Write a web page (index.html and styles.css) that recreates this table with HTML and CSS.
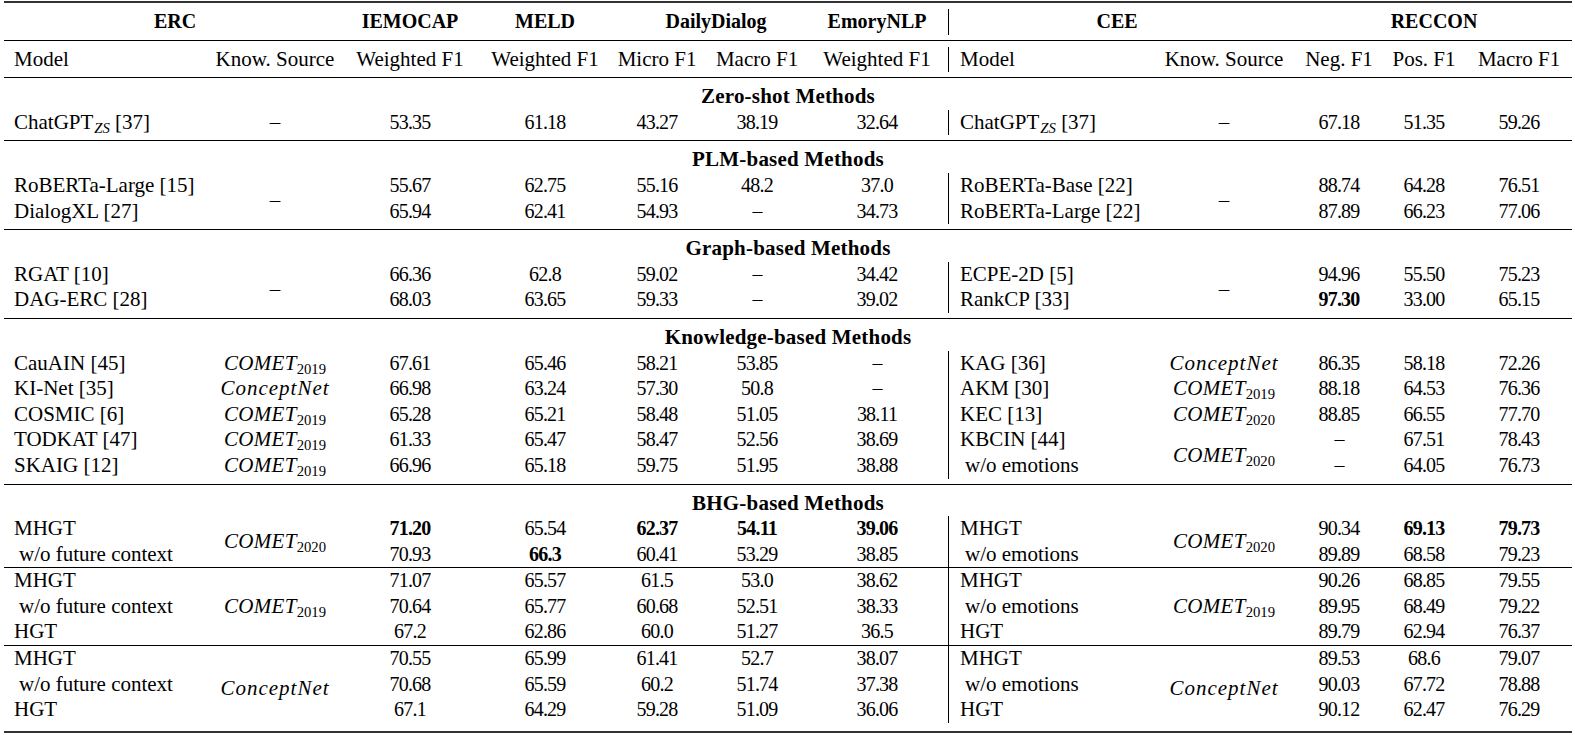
FILE: index.html
```html
<!DOCTYPE html>
<html lang="en">
<head>
<meta charset="utf-8">
<title>Results table</title>
<link rel="stylesheet" href="styles.css">
</head>
<body>
<table class="tbl">
<colgroup>
<col class="c-model"><col class="c-know"><col class="c-iem"><col class="c-meld"><col class="c-micro"><col class="c-macro"><col class="c-emory"><col class="c-model2"><col class="c-know2"><col class="c-neg"><col class="c-pos"><col class="c-macro2">
</colgroup>
<tbody>
<tr class="hdr grp first end">
<td colspan="2" class="b">ERC</td><td class="b">IEMOCAP</td><td class="b">MELD</td><td colspan="2" class="b">DailyDialog</td><td class="b">EmoryNLP</td><td colspan="2" class="b vl">CEE</td><td colspan="3" class="b">RECCON</td>
</tr>
<tr class="hdr first end">
<td class="m">Model</td><td>Know. Source</td><td>Weighted F1</td><td>Weighted F1</td><td>Micro F1</td><td>Macro F1</td><td>Weighted F1</td><td class="m2 vl">Model</td><td>Know. Source</td><td>Neg. F1</td><td>Pos. F1</td><td>Macro F1</td>
</tr>

<tr class="sec first"><td colspan="12" class="b">Zero-shot Methods</td></tr>
<tr class="end">
<td class="m">ChatGPT<i class="zs">ZS</i> [37]</td><td class="k">–</td><td>53.35</td><td>61.18</td><td>43.27</td><td>38.19</td><td>32.64</td><td class="m2 vl">ChatGPT<i class="zs">ZS</i> [37]</td><td class="k">–</td><td>67.18</td><td>51.35</td><td>59.26</td>
</tr>

<tr class="sec first"><td colspan="12" class="b">PLM-based Methods</td></tr>
<tr>
<td class="m">RoBERTa-Large [15]</td><td class="k" rowspan="2">–</td><td>55.67</td><td>62.75</td><td>55.16</td><td>48.2</td><td>37.0</td><td class="m2 vl">RoBERTa-Base [22]</td><td class="k" rowspan="2">–</td><td>88.74</td><td>64.28</td><td>76.51</td>
</tr>
<tr class="end">
<td class="m">DialogXL [27]</td><td>65.94</td><td>62.41</td><td>54.93</td><td>–</td><td>34.73</td><td class="m2 vl">RoBERTa-Large [22]</td><td>87.89</td><td>66.23</td><td>77.06</td>
</tr>

<tr class="sec first"><td colspan="12" class="b">Graph-based Methods</td></tr>
<tr>
<td class="m">RGAT [10]</td><td class="k" rowspan="2">–</td><td>66.36</td><td>62.8</td><td>59.02</td><td>–</td><td>34.42</td><td class="m2 vl">ECPE-2D [5]</td><td class="k" rowspan="2">–</td><td>94.96</td><td>55.50</td><td>75.23</td>
</tr>
<tr class="end">
<td class="m">DAG-ERC [28]</td><td>68.03</td><td>63.65</td><td>59.33</td><td>–</td><td>39.02</td><td class="m2 vl">RankCP [33]</td><td class="b">97.30</td><td>33.00</td><td>65.15</td>
</tr>

<tr class="sec first"><td colspan="12" class="b">Knowledge-based Methods</td></tr>
<tr>
<td class="m">CauAIN [45]</td><td class="k"><span class="kb">COMET</span><span class="yr">2019</span></td><td>67.61</td><td>65.46</td><td>58.21</td><td>53.85</td><td>–</td><td class="m2 vl">KAG [36]</td><td class="k"><span class="kn">ConceptNet</span></td><td>86.35</td><td>58.18</td><td>72.26</td>
</tr>
<tr>
<td class="m">KI-Net [35]</td><td class="k"><span class="kn">ConceptNet</span></td><td>66.98</td><td>63.24</td><td>57.30</td><td>50.8</td><td>–</td><td class="m2 vl">AKM [30]</td><td class="k"><span class="kb">COMET</span><span class="yr">2019</span></td><td>88.18</td><td>64.53</td><td>76.36</td>
</tr>
<tr>
<td class="m">COSMIC [6]</td><td class="k"><span class="kb">COMET</span><span class="yr">2019</span></td><td>65.28</td><td>65.21</td><td>58.48</td><td>51.05</td><td>38.11</td><td class="m2 vl">KEC [13]</td><td class="k"><span class="kb">COMET</span><span class="yr">2020</span></td><td>88.85</td><td>66.55</td><td>77.70</td>
</tr>
<tr>
<td class="m">TODKAT [47]</td><td class="k"><span class="kb">COMET</span><span class="yr">2019</span></td><td>61.33</td><td>65.47</td><td>58.47</td><td>52.56</td><td>38.69</td><td class="m2 vl">KBCIN [44]</td><td class="k span-end" rowspan="2"><span class="kb">COMET</span><span class="yr">2020</span></td><td>–</td><td>67.51</td><td>78.43</td>
</tr>
<tr class="end">
<td class="m">SKAIG [12]</td><td class="k"><span class="kb">COMET</span><span class="yr">2019</span></td><td>66.96</td><td>65.18</td><td>59.75</td><td>51.95</td><td>38.88</td><td class="m2 vl ind">w/o emotions</td><td>–</td><td>64.05</td><td>76.73</td>
</tr>

<tr class="sec first"><td colspan="12" class="b">BHG-based Methods</td></tr>
<tr>
<td class="m">MHGT</td><td class="k span-cl" rowspan="2"><span class="kb">COMET</span><span class="yr">2020</span></td><td class="b">71.20</td><td>65.54</td><td class="b">62.37</td><td class="b">54.11</td><td class="b">39.06</td><td class="m2 vl">MHGT</td><td class="k span-cl" rowspan="2"><span class="kb">COMET</span><span class="yr">2020</span></td><td>90.34</td><td class="b">69.13</td><td class="b">79.73</td>
</tr>
<tr class="cl">
<td class="m ind">w/o future context</td><td>70.93</td><td class="b">66.3</td><td>60.41</td><td>53.29</td><td>38.85</td><td class="m2 vl ind">w/o emotions</td><td>89.89</td><td>68.58</td><td>79.23</td>
</tr>
<tr>
<td class="m">MHGT</td><td class="k span-cl" rowspan="3"><span class="kb">COMET</span><span class="yr">2019</span></td><td>71.07</td><td>65.57</td><td>61.5</td><td>53.0</td><td>38.62</td><td class="m2 vl">MHGT</td><td class="k span-cl" rowspan="3"><span class="kb">COMET</span><span class="yr">2019</span></td><td>90.26</td><td>68.85</td><td>79.55</td>
</tr>
<tr>
<td class="m ind">w/o future context</td><td>70.64</td><td>65.77</td><td>60.68</td><td>52.51</td><td>38.33</td><td class="m2 vl ind">w/o emotions</td><td>89.95</td><td>68.49</td><td>79.22</td>
</tr>
<tr class="cl">
<td class="m">HGT</td><td>67.2</td><td>62.86</td><td>60.0</td><td>51.27</td><td>36.5</td><td class="m2 vl">HGT</td><td>89.79</td><td>62.94</td><td>76.37</td>
</tr>
<tr>
<td class="m">MHGT</td><td class="k" rowspan="3"><span class="kn">ConceptNet</span></td><td>70.55</td><td>65.99</td><td>61.41</td><td>52.7</td><td>38.07</td><td class="m2 vl">MHGT</td><td class="k" rowspan="3"><span class="kn">ConceptNet</span></td><td>89.53</td><td>68.6</td><td>79.07</td>
</tr>
<tr>
<td class="m ind">w/o future context</td><td>70.68</td><td>65.59</td><td>60.2</td><td>51.74</td><td>37.38</td><td class="m2 vl ind">w/o emotions</td><td>90.03</td><td>67.72</td><td>78.88</td>
</tr>
<tr class="last">
<td class="m">HGT</td><td>67.1</td><td>64.29</td><td>59.28</td><td>51.09</td><td>36.06</td><td class="m2 vl">HGT</td><td>90.12</td><td>62.47</td><td>76.29</td>
</tr>
</tbody>
</table>
</body>
</html>
```

FILE: styles.css
```css
html, body {
  margin: 0;
  padding: 0;
  background: #ffffff;
}

body {
  color: #000000;
  font-family: "Liberation Serif", "Times New Roman", serif;
  font-size: 20px;
}

.tbl {
  border-collapse: collapse;
  table-layout: fixed;
  width: 1568px;
  margin: 1px 0 0 4px;
  border-top: 2px solid #333333;
  border-bottom: 2px solid #333333;
}

.c-model  { width: 200px; }
.c-know   { width: 142px; }
.c-iem    { width: 128px; }
.c-meld   { width: 142px; }
.c-micro  { width: 82px; }
.c-macro  { width: 118px; }
.c-emory  { width: 122px; }
.c-model2 { width: 214px; }
.c-know2  { width: 144px; }
.c-neg    { width: 86px; }
.c-pos    { width: 84px; }
.c-macro2 { width: 106px; }

/* numeric cells (default) */
.tbl td {
  padding: 0;
  font-size: 20px;
  line-height: 25.6px;
  white-space: nowrap;
  text-align: center;
  vertical-align: middle;
  letter-spacing: -0.8px;
}

/* text cells */
.tbl .hdr td,
.tbl td.m,
.tbl td.m2,
.tbl td.k {
  font-size: 21px;
  letter-spacing: 0;
}

.tbl .hdr.grp td {
  font-size: 20px;
}

.tbl .sec td {
  font-size: 21px;
  letter-spacing: 0.2px;
}

.tbl .b { font-weight: bold; }

.tbl td.m {
  text-align: left;
  padding-left: 10px;
}

.tbl td.m2 {
  text-align: left;
  padding-left: 22px;
}

.tbl td.m.ind  { padding-left: 15px; }
.tbl td.m2.ind { padding-left: 27px; }

/* rule spacing, booktabs-like */
.tbl tr.first td { padding-top: 6px; }
.tbl tr.end td { padding-bottom: 5px; }
.tbl tr.end { border-bottom: 1px solid #000000; }
.tbl tr.cl { border-bottom: 1px solid #000000; }
.tbl tr.last td { padding-bottom: 8px; }
.tbl td.span-end { border-bottom: 1px solid #000000; }
.tbl td.span-cl { border-bottom: 1px solid #000000; }

/* vertical separator between ERC and CEE */
.tbl td.vl {
  background-image: linear-gradient(#000000, #000000);
  background-repeat: no-repeat;
  background-position: 10px 0;
  background-size: 1px 100%;
}
.tbl tr.first td.vl {
  background-position: 10px 6px;
  background-size: 1px calc(100% - 6px);
}
.tbl tr.end td.vl {
  background-size: 1px calc(100% - 5px);
}
.tbl tr.last td.vl {
  background-size: 1px calc(100% - 8px);
}
.tbl tr.first.end td.vl {
  background-position: 10px 6px;
  background-size: 1px calc(100% - 11px);
}

.zs {
  font-size: 0.7em;
  vertical-align: -0.3em;
  line-height: 0;
  margin-left: 1px;
}

.kb {
  font-style: italic;
  letter-spacing: 0.3px;
}

.yr {
  font-size: 0.7em;
  vertical-align: -0.3em;
  line-height: 0;
}

.kn {
  font-style: italic;
  letter-spacing: 1px;
}
```
